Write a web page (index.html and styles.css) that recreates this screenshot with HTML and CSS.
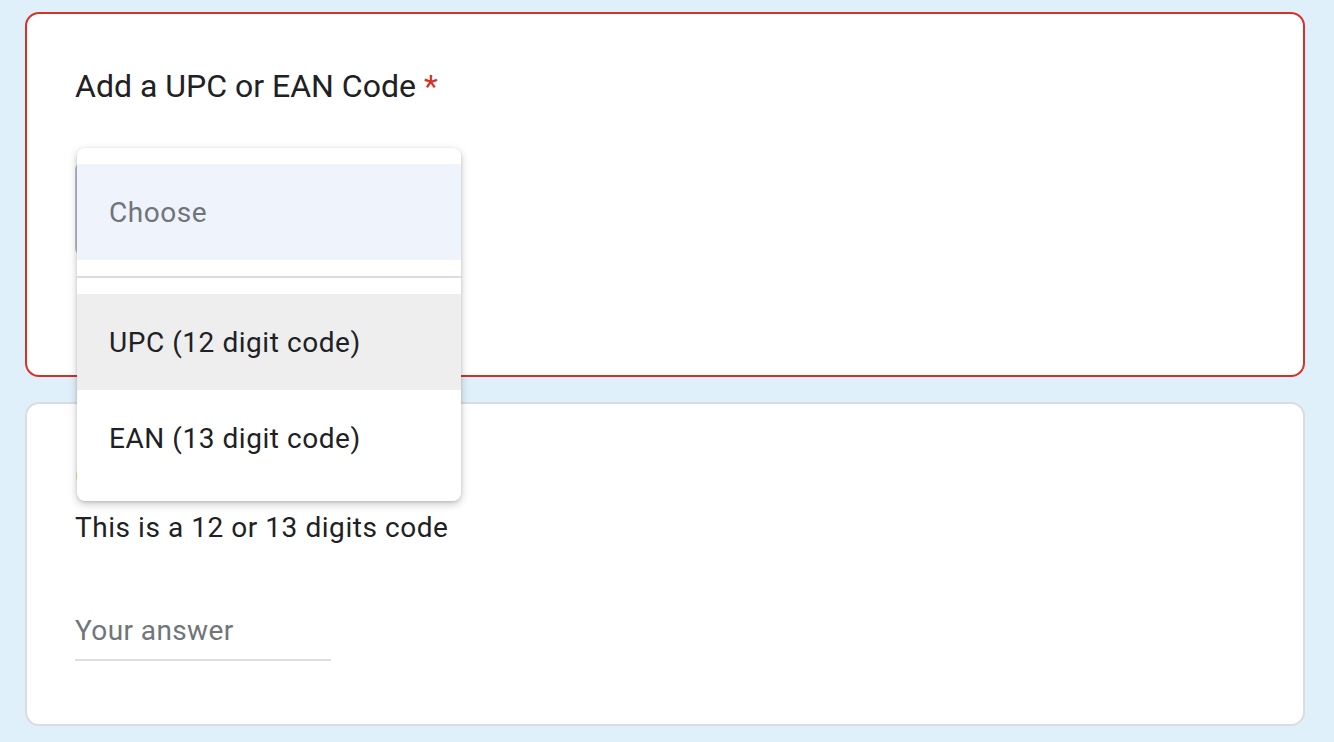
FILE: index.html
```html
<!DOCTYPE html>
<html lang="en">
<head>
<meta charset="utf-8">
<title>UPC or EAN Code</title>
<link rel="stylesheet" href="styles.css">
</head>
<body>
<main class="form">
  <section class="card card-error">
    <div class="q-title">Add a UPC or EAN Code<span class="req">*</span></div>
    <div class="select-wrap">
      <div class="select-box"></div>
      <div class="menu">
        <div class="opt opt-selected opt-placeholder">Choose</div>
        <div class="menu-sep"></div>
        <div class="opt opt-hover">UPC (12 digit code)</div>
        <div class="opt">EAN (13 digit code)</div>
      </div>
    </div>
  </section>
  <section class="card card-answer">
    <div class="q-title">Code</div>
    <div class="q-desc">This is a 12 or 13 digits code</div>
    <div class="answer"><span class="placeholder">Your answer</span></div>
  </section>
</main>
</body>
</html>
```

FILE: styles.css
```css
* { box-sizing: border-box; }
html, body { margin: 0; padding: 0; }
body {
  background: #e0f0fa;
  font-family: Roboto, "Noto Sans", Arial, sans-serif;
  color: #202124;
  width: 1334px;
  height: 742px;
  overflow: hidden;
}
.form {
  padding: 12px 0 0 25px;
  display: flex;
  flex-direction: column;
  gap: 25px;
  width: 1305px;
}
.card {
  background: #fff;
  border: 2px solid #dadce0;
  border-radius: 14px;
  padding: 48px 48px 62px 48px;
  position: relative;
}
.card-answer {
  padding-bottom: 63px;
}
.card-error {
  border-color: #d93025;
  height: 365px;
  z-index: 2;
}
.q-title {
  font-size: 32px;
  line-height: 48px;
  letter-spacing: 0;
  color: #202124;
}
.req {
  color: #d93025;
  margin-left: 8px;
}
.select-wrap {
  position: relative;
  margin-top: 52px;
  width: 300px;
  height: 94px;
}
.select-box {
  height: 94px;
  border: 2px solid #bdc1c6;
  border-radius: 8px;
}
.menu {
  position: absolute;
  top: -14px;
  left: 2px;
  width: 384px;
  background: #fff;
  border-radius: 8px;
  padding: 16px 0 15px 0;
  box-shadow: 0 3px 8px rgba(0,0,0,0.22), 0 1px 3px rgba(0,0,0,0.12);
}
.opt {
  height: 96px;
  padding-left: 32px;
  display: flex;
  align-items: center;
  font-size: 28px;
  letter-spacing: 0.55px;
  color: #202124;
}
.opt-selected { background: #eef3fc; }
.opt-placeholder { color: #70757a; }
.opt-hover { background: #eeeeee; }
.menu-sep {
  height: 2px;
  background: #dadce0;
  margin: 16px 0;
}
.q-desc {
  margin-top: 8px;
  font-size: 28px;
  line-height: 40px;
  letter-spacing: 0.55px;
  color: #202124;
}
.answer {
  margin-top: 59px;
  width: 256px;
  line-height: 48px;
  padding-bottom: 0;
  border-bottom: 2px solid #e0e0e0;
}
.placeholder {
  font-size: 28px;
  letter-spacing: 0.4px;
  color: #70757a;
}
```
